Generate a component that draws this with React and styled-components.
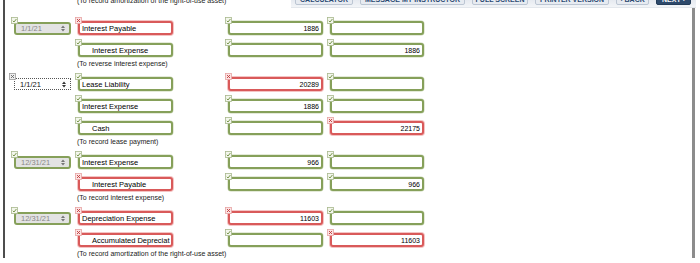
import React from "react";
import styled, { createGlobalStyle, css } from "styled-components";

const Global = createGlobalStyle`
  html, body { margin: 0; padding: 0; background: #fff; }
  body { font-family: "Liberation Sans", Arial, sans-serif; }
`;

const Frame = styled.div`
  position: relative;
  width: 700px;
  height: 263px;
  overflow: hidden;
  padding-left: 3px;
  box-sizing: border-box;
  background: #fff;
`;

const Content = styled.div`
  width: 692px;
  height: 263px;
  box-sizing: border-box;
  border-left: 2px solid #4d4d4d;
  border-right: 3px solid #8c8c8c;
  padding-left: 9px;
`;

const Toolbar = styled.div`
  position: absolute;
  top: 0;
  left: 291px;
  right: 4px;
  height: 7px;
  display: flex;
  align-items: flex-end;
  gap: 7px;
  padding-left: 4px;
  background: linear-gradient(#e6eaf0, #f3f5f8);
  border-bottom: 1px solid #e3e7ec;
  overflow: hidden;
`;

const ToolButton = styled.div`
  flex: none;
  width: ${(p) => p.$w}px;
  height: 15px;
  margin-bottom: 2px;
  box-sizing: border-box;
  display: flex;
  align-items: flex-end;
  justify-content: center;
  padding-bottom: 1px;
  font: bold 7px/1 "Liberation Sans", Arial, sans-serif;
  border-radius: 2px;
  white-space: nowrap;
  overflow: hidden;
  ${(p) =>
    p.$primary
      ? css`
          background: #2e4a6c;
          color: #fff;
          border: 1px solid #243c58;
        `
      : css`
          background: #e7ebf1;
          color: #2b4a73;
          border: 1px solid #bcc6d3;
        `}
`;

const Journal = styled.div`
  padding-top: 7px;
`;

const Note = styled.div`
  height: 12px;
  line-height: 12px;
  margin-left: 63px;
  font-size: 7px;
  color: #222;
  white-space: nowrap;
  ${(p) => p.$top && css`margin-top: -5px;`}
`;

const Row = styled.div`
  display: flex;
  align-items: flex-start;
  gap: 55px;
  height: 22px;
  padding-top: 7px;
  box-sizing: border-box;
`;

const Group = styled.div`
  display: flex;
  align-items: flex-start;
  gap: 7px;
`;

const Slot = styled.div`
  position: relative;
  flex: none;
  width: ${(p) => p.$w}px;
`;

const Field = styled.div`
  height: 14px;
  box-sizing: border-box;
  border-radius: 3px;
  background: #fff;
  display: flex;
  align-items: center;
  font-size: 7.5px;
  color: #000;
  white-space: nowrap;
  overflow: hidden;
  justify-content: ${(p) => (p.$num ? "flex-end" : "flex-start")};
  padding: ${(p) => (p.$num ? "0 2px 0 0" : p.$indent ? "0 0 0 12px" : "0 0 0 2px")};
  ${(p) => p.$num && css`font-size: 7px;`}
  ${(p) =>
    p.$state === "bad"
      ? css`
          border: 2px solid #d95a5a;
          box-shadow: 0 0 0 1px #f4c4c4;
        `
      : css`
          border: 2px solid #86a05a;
          box-shadow: 0 0 0 0.5px #c9d6b4;
        `}
`;

const DateBox = styled.div`
  height: ${(p) => (p.$plain ? 12 : 13)}px;
  margin-top: 1px;
  box-sizing: border-box;
  display: flex;
  align-items: center;
  justify-content: space-between;
  padding: 0 4px 0 5px;
  font-size: 7.5px;
  border-radius: ${(p) => (p.$plain ? 0 : 3)}px;
  ${(p) =>
    p.$plain
      ? css`
          border: 1px dotted #555;
          background: #fff;
          color: #111;
        `
      : css`
          border: 2px solid #86a05a;
          background: #e3e3e3;
          color: #888;
        `}
`;

const Badge = styled.svg`
  position: absolute;
  left: ${(p) => (p.$wide ? -5 : -3)}px;
  top: -4px;
  width: 7px;
  height: 7px;
  overflow: visible;
`;

const Arrows = ({ color }) => (
  <svg width="4" height="7" viewBox="0 0 4 7">
    <path d="M0 3 L2 0.5 L4 3 Z M0 4 L2 6.5 L4 4 Z" fill={color} />
  </svg>
);

const Mark = ({ state }) => {
  if (state === "bad") {
    return (
      <Badge viewBox="0 0 7 7">
        <rect x="0.5" y="0.5" width="6" height="6" fill="#fbe3e3" stroke="#e6a3a3" strokeWidth="0.8" />
        <path d="M2 2 L5 5 M5 2 L2 5" stroke="#c23b3b" strokeWidth="0.9" />
      </Badge>
    );
  }
  if (state === "none") {
    return (
      <Badge viewBox="0 0 7 7" $wide>
        <rect x="0.5" y="0.5" width="6" height="6" fill="#efefef" stroke="#9a9a9a" strokeWidth="0.8" />
        <path d="M2 2 L5 5 M5 2 L2 5" stroke="#666" strokeWidth="0.9" />
      </Badge>
    );
  }
  return (
    <Badge viewBox="0 0 7 7">
      <rect x="0.5" y="0.5" width="6" height="6" fill="#f3f6ec" stroke="#a9b98e" strokeWidth="0.8" />
      <path d="M1.8 3.8 L3 5 L5.4 2" fill="none" stroke="#6c8c3c" strokeWidth="0.9" />
    </Badge>
  );
};

const entries = [
  {
    date: "1/1/21",
    dateState: "ok",
    rows: [
      { acct: "Interest Payable", a: "bad", debit: "1886", d: "ok", credit: "", c: "ok" },
      { acct: "Interest Expense", indent: true, a: "ok", debit: "", d: "ok", credit: "1886", c: "ok" },
    ],
    note: "(To reverse interest expense)",
  },
  {
    date: "1/1/21",
    dateState: "none",
    rows: [
      { acct: "Lease Liability", a: "ok", debit: "20289", d: "bad", credit: "", c: "ok" },
      { acct: "Interest Expense", a: "ok", debit: "1886", d: "ok", credit: "", c: "ok" },
      { acct: "Cash", indent: true, a: "ok", debit: "", d: "ok", credit: "22175", c: "bad" },
    ],
    note: "(To record lease payment)",
  },
  {
    date: "12/31/21",
    dateState: "ok",
    rows: [
      { acct: "Interest Expense", a: "ok", debit: "966", d: "ok", credit: "", c: "ok" },
      { acct: "Interest Payable", indent: true, a: "bad", debit: "", d: "ok", credit: "966", c: "ok" },
    ],
    note: "(To record interest expense)",
  },
  {
    date: "12/31/21",
    dateState: "ok",
    rows: [
      { acct: "Depreciation Expense", a: "bad", debit: "11603", d: "bad", credit: "", c: "ok" },
      { acct: "Accumulated Depreciat", indent: true, a: "bad", debit: "", d: "ok", credit: "11603", c: "bad" },
    ],
    note: "(To record amortization of the right-of-use asset)",
  },
];

const buttons = [
  { label: "CALCULATOR", w: 58 },
  { label: "MESSAGE MY INSTRUCTOR", w: 105 },
  { label: "FULL SCREEN", w: 56 },
  { label: "PRINTER VERSION", w: 74 },
  { label: "\u2039 BACK", w: 33 },
  { label: "NEXT \u203A", w: 35, primary: true },
];

export default function App() {
  return (
    <Frame>
      <Global />
      <Content>
        <Note $top>(To record amortization of the right-of-use asset)</Note>
        <Journal>
          {entries.map((e, ei) => (
            <div key={ei}>
              {e.rows.map((r, ri) => (
                <Row key={ri}>
                  <Group>
                    <Slot $w={57}>
                      {ri === 0 && (
                        <>
                          <Mark state={e.dateState} />
                          <DateBox $plain={e.dateState === "none"}>
                            <span>{e.date}</span>
                            <Arrows color={e.dateState === "none" ? "#333" : "#777"} />
                          </DateBox>
                        </>
                      )}
                    </Slot>
                    <Slot $w={95}>
                      <Mark state={r.a} />
                      <Field $state={r.a} $indent={r.indent}>{r.acct}</Field>
                    </Slot>
                  </Group>
                  <Group>
                    <Slot $w={95}>
                      <Mark state={r.d} />
                      <Field $state={r.d} $num>{r.debit}</Field>
                    </Slot>
                    <Slot $w={94}>
                      <Mark state={r.c} />
                      <Field $state={r.c} $num>{r.credit}</Field>
                    </Slot>
                  </Group>
                </Row>
              ))}
              <Note>{e.note}</Note>
            </div>
          ))}
        </Journal>
      </Content>
      <Toolbar>
        {buttons.map((b) => (
          <ToolButton key={b.label} $w={b.w} $primary={b.primary}>{b.label}</ToolButton>
        ))}
      </Toolbar>
    </Frame>
  );
}
